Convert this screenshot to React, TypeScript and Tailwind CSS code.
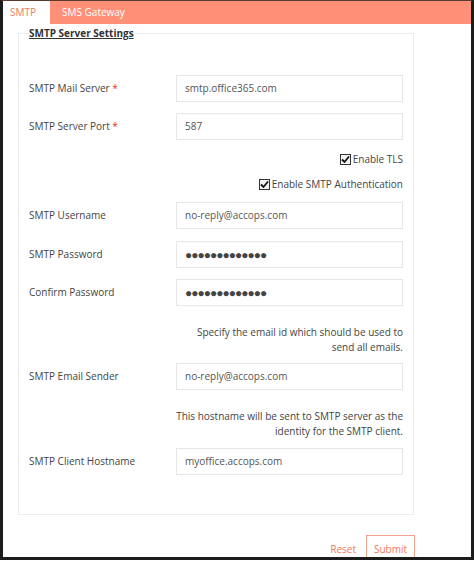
import React from "react";

const font = { fontFamily: '"Open Sans", "Noto Sans", sans-serif' };

function Field({ label, value, required }: { label: string; value: string; required?: boolean }) {
  return (
    <div className="flex items-center">
      <div className="w-[147px] text-[10px] text-[#444]">
        {label}
        {required && <span className="text-[#e0342c]"> *</span>}
      </div>
      <div className="w-[227px] h-[27px] border border-[#e6e6e6] flex items-center pl-[8px] text-[10px] text-[#555]">
        {value}
      </div>
    </div>
  );
}

function PasswordField({ label }: { label: string }) {
  return (
    <div className="flex items-center">
      <div className="w-[147px] text-[10px] text-[#444]">{label}</div>
      <div className="w-[227px] h-[27px] border border-[#e6e6e6] flex items-center pl-[8px] text-[12px] text-[#444] tracking-[-1px]">
        ●●●●●●●●●●●●●
      </div>
    </div>
  );
}

function Check({ label }: { label: string }) {
  return (
    <div className="flex items-center justify-end text-[10px] text-[#444]">
      <span className="w-[11px] h-[11px] border border-[#333] bg-[#f2f2f2] flex items-center justify-center mr-[2px]">
        <svg width="9" height="9" viewBox="0 0 9 9">
          <path d="M1 4.5 L3.5 7 L8 1.5" fill="none" stroke="#111" strokeWidth="1.8" />
        </svg>
      </span>
      {label}
    </div>
  );
}

function Help({ lines }: { lines: string[] }) {
  return (
    <div className="text-right text-[10px] leading-[15px] text-[#444]">
      {lines.map((l) => (
        <div key={l}>{l}</div>
      ))}
    </div>
  );
}

export default function App() {
  return (
    <div className="w-[474px] h-[563px] bg-white" style={font}>
      <div className="w-[474px] h-[560px] border-t border-t-[#5b3b2b] border-x-[3px] border-b-[3px] border-x-[#1c1c1c] border-b-[#1c1c1c] overflow-hidden flex flex-col">
        <div className="h-[23px] bg-[#fd9077] flex items-center shrink-0">
          <div className="h-full w-[47px] bg-white pl-[7px] flex items-center text-[10px] text-[#f2785c]">SMTP</div>
          <div className="pl-[12px] text-[10px] text-white">SMS Gateway</div>
        </div>
        <div className="mt-[5px] overflow-hidden shrink-0">
          <fieldset className="ml-[15px] w-[396px] h-[489px] -mt-[3px] border border-[#ececec] px-[10px]">
            <legend className="p-0 text-[10px] leading-[14px] font-bold text-[#333] underline">SMTP Server Settings</legend>
            <div className="mt-[35px] flex flex-col">
              <Field label="SMTP Mail Server" value="smtp.office365.com" required />
              <div className="mt-[11px]">
                <Field label="SMTP Server Port" value="587" required />
              </div>
              <div className="mt-[12px]">
                <Check label="Enable TLS" />
              </div>
              <div className="mt-[10px]">
                <Check label="Enable SMTP Authentication" />
              </div>
              <div className="mt-[10px]">
                <Field label="SMTP Username" value="no-reply@accops.com" />
              </div>
              <div className="mt-[12px]">
                <PasswordField label="SMTP Password" />
              </div>
              <div className="mt-[11px]">
                <PasswordField label="Confirm Password" />
              </div>
              <div className="mt-[19px]">
                <Help lines={["Specify the email id which should be used to", "send all emails."]} />
              </div>
              <div className="mt-[8px]">
                <Field label="SMTP Email Sender" value="no-reply@accops.com" />
              </div>
              <div className="mt-[19px]">
                <Help lines={["This hostname will be sent to SMTP server as the", "identity for the SMTP client."]} />
              </div>
              <div className="mt-[9px]">
                <Field label="SMTP Client Hostname" value="myoffice.accops.com" />
              </div>
            </div>
          </fieldset>
        </div>
        <div className="mt-[20px] flex items-start justify-end pr-[56px] shrink-0">
          <div className="mt-[7px] mr-[10px] text-[10px] text-[#f2785c]">Reset</div>
          <div className="h-[30px] w-[49px] border border-[#f2a08c] flex items-start justify-center pt-[6px] text-[10px] text-[#f2785c]">
            Submit
          </div>
        </div>
      </div>
    </div>
  );
}
